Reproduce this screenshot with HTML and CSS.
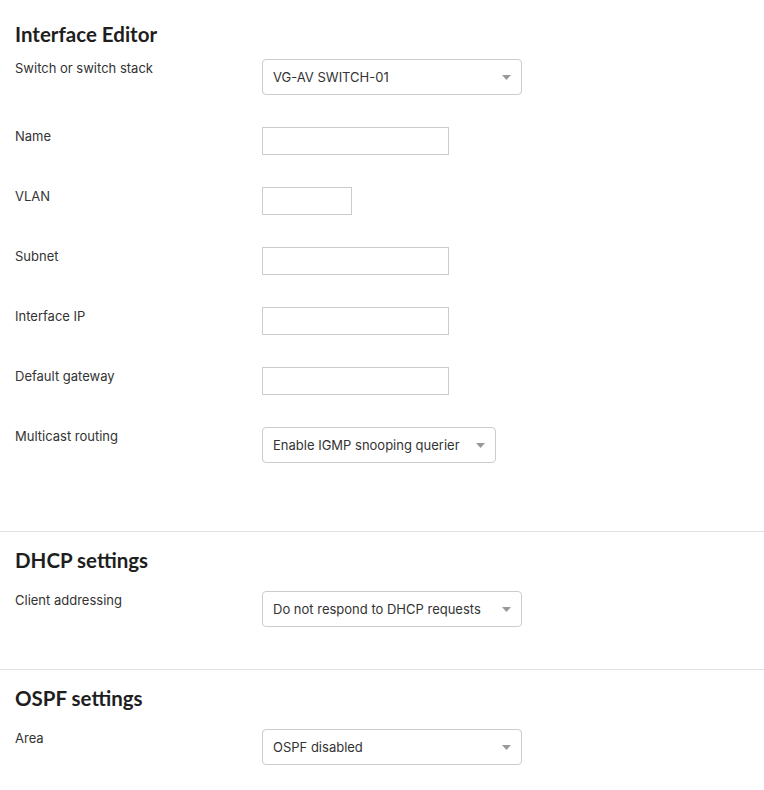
FILE: index.html
```html
<!DOCTYPE html>
<html lang="en">
<head>
<meta charset="utf-8">
<title>Interface Editor</title>
<link rel="stylesheet" href="styles.css">
</head>
<body>
<section class="section section-first">
  <h1 class="heading heading-first">Interface Editor</h1>
  <div class="row">
    <div class="label">Switch or switch stack</div>
    <div class="select select-wide"><span>VG-AV SWITCH-01</span><svg class="caret" width="9" height="5" viewBox="0 0 9 5"><path d="M0 0H9L4.5 5Z"/></svg></div>
  </div>
  <div class="row">
    <div class="label">Name</div>
    <div class="input"></div>
  </div>
  <div class="row">
    <div class="label">VLAN</div>
    <div class="input input-short"></div>
  </div>
  <div class="row">
    <div class="label">Subnet</div>
    <div class="input"></div>
  </div>
  <div class="row">
    <div class="label">Interface IP</div>
    <div class="input"></div>
  </div>
  <div class="row">
    <div class="label">Default gateway</div>
    <div class="input"></div>
  </div>
  <div class="row">
    <div class="label">Multicast routing</div>
    <div class="select select-mid"><span>Enable IGMP snooping querier</span><svg class="caret" width="9" height="5" viewBox="0 0 9 5"><path d="M0 0H9L4.5 5Z"/></svg></div>
  </div>
</section>
<section class="section section-dhcp">
  <h2 class="heading">DHCP settings</h2>
  <div class="row">
    <div class="label">Client addressing</div>
    <div class="select select-wide"><span>Do not respond to DHCP requests</span><svg class="caret" width="9" height="5" viewBox="0 0 9 5"><path d="M0 0H9L4.5 5Z"/></svg></div>
  </div>
</section>
<section class="section section-ospf">
  <h2 class="heading">OSPF settings</h2>
  <div class="row">
    <div class="label">Area</div>
    <div class="select select-wide"><span>OSPF disabled</span><svg class="caret" width="9" height="5" viewBox="0 0 9 5"><path d="M0 0H9L4.5 5Z"/></svg></div>
  </div>
</section>
</body>
</html>
```

FILE: styles.css
```css
html, body {
  margin: 0;
  padding: 0;
  background: #ffffff;
}

body {
  font-family: Inter, "Noto Sans", "Liberation Sans", sans-serif;
  font-size: 13px;
  color: #333333;
}

.section {
  padding: 16px 15px 10px;
}

.section + .section {
  border-top: 1px solid #e0e0e0;
}

.section-first {
  padding-top: 22px;
  padding-bottom: 36px;
}

.heading {
  margin: 0 0 19px;
  font-family: Lato, "Liberation Sans", sans-serif;
  font-weight: 700;
  font-size: 20.5px;
  line-height: 24px;
  color: #1e1e1e;
}

.heading-first {
  margin-bottom: 13px;
}

.row {
  display: grid;
  grid-template-columns: 247px auto;
  align-items: start;
  margin-bottom: 32px;
}

.label {
  padding-top: 1px;
  line-height: 16px;
  color: #333333;
}

.select {
  box-sizing: border-box;
  display: flex;
  align-items: center;
  height: 36px;
  padding: 0 10px 0 10px;
  border: 1px solid #cccccc;
  border-radius: 4px;
  color: #333333;
  line-height: 16px;
}

.select-wide {
  width: 260px;
}

.select-mid {
  width: 234px;
}

.caret {
  margin-left: auto;
  fill: #999999;
  flex: none;
}

.input {
  box-sizing: border-box;
  width: 187px;
  height: 28px;
  border: 1px solid #cccccc;
}

.input-short {
  width: 90px;
}
```
